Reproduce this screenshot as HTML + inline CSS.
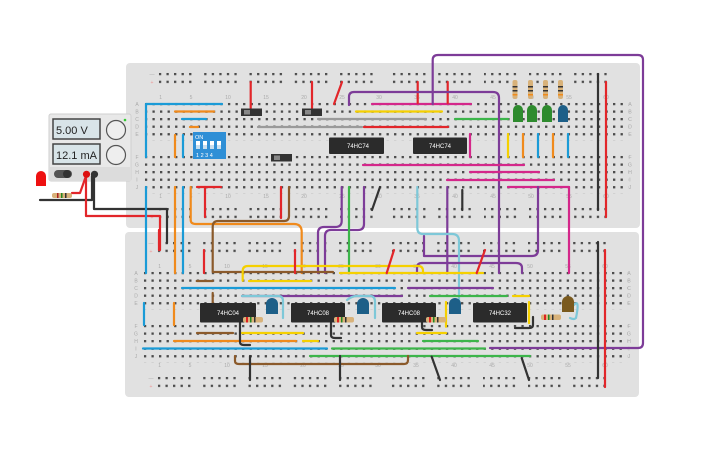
<!DOCTYPE html>
<html><head><meta charset="utf-8"><style>
html,body{margin:0;padding:0;background:#fff;width:725px;height:453px;overflow:hidden}
svg{display:block}
text{font-family:"Liberation Sans",sans-serif}
</style></head><body>
<svg width="725" height="453" viewBox="0 0 725 453" xmlns="http://www.w3.org/2000/svg">
<defs>
<pattern id="h" patternUnits="userSpaceOnUse" x="144.9" y="102.9" width="7.55" height="7.55"><rect width="2.3" height="2.3" fill="#4a4a4a"/></pattern>
<pattern id="h2" patternUnits="userSpaceOnUse" x="144.9" y="155.9" width="7.55" height="7.55"><rect width="2.3" height="2.3" fill="#4a4a4a"/></pattern>
<pattern id="r" patternUnits="userSpaceOnUse" x="158.9" y="72.9" width="7.55" height="7.8"><rect width="2.3" height="2.3" fill="#4a4a4a"/></pattern>
<pattern id="rb" patternUnits="userSpaceOnUse" x="158.9" y="207.9" width="7.55" height="7.8"><rect width="2.3" height="2.3" fill="#4a4a4a"/></pattern>
<g id="board">
<rect x="126" y="63" width="514" height="165" rx="4" fill="#e1e1e1"/>
<rect x="144.9" y="102.9" width="483.2" height="37.75" fill="url(#h)"/>
<rect x="144.9" y="155.9" width="483.2" height="37.75" fill="url(#h2)"/>
<g fill="url(#r)">
<rect x="158.9" y="72.9" width="37" height="11"/><rect x="204" y="72.9" width="37" height="11"/><rect x="249" y="72.9" width="37" height="11"/><rect x="294" y="72.9" width="37" height="11"/><rect x="340" y="72.9" width="37" height="11"/><rect x="392" y="72.9" width="37" height="11"/><rect x="438" y="72.9" width="37" height="11"/><rect x="484" y="72.9" width="37" height="11"/><rect x="529" y="72.9" width="37" height="11"/><rect x="574" y="72.9" width="37" height="11"/>
</g>
<g fill="url(#rb)">
<rect x="158.9" y="207.9" width="37" height="11"/><rect x="204" y="207.9" width="37" height="11"/><rect x="249" y="207.9" width="37" height="11"/><rect x="294" y="207.9" width="37" height="11"/><rect x="340" y="207.9" width="37" height="11"/><rect x="392" y="207.9" width="37" height="11"/><rect x="438" y="207.9" width="37" height="11"/><rect x="484" y="207.9" width="37" height="11"/><rect x="529" y="207.9" width="37" height="11"/><rect x="574" y="207.9" width="37" height="11"/>
</g>
<g font-size="5" fill="#aaa" text-anchor="middle">
<text x="152" y="76">—</text><text x="152" y="84" fill="#e99">+</text>
<text x="152" y="211">—</text><text x="152" y="219" fill="#e99">+</text>
<text x="160.7" y="99">1</text><text x="191" y="99">5</text><text x="228" y="99">10</text><text x="266" y="99">15</text><text x="304" y="99">20</text><text x="342" y="99">25</text><text x="379" y="99">30</text><text x="417" y="99">35</text><text x="455" y="99">40</text><text x="493" y="99">45</text><text x="531" y="99">50</text><text x="569" y="99">55</text><text x="606" y="99">60</text>
<text x="160.7" y="198">1</text><text x="191" y="198">5</text><text x="228" y="198">10</text><text x="266" y="198">15</text><text x="304" y="198">20</text><text x="342" y="198">25</text><text x="379" y="198">30</text><text x="417" y="198">35</text><text x="455" y="198">40</text><text x="493" y="198">45</text><text x="531" y="198">50</text><text x="569" y="198">55</text><text x="606" y="198">60</text>
<text x="137" y="106">A</text><text x="137" y="113.5">B</text><text x="137" y="121">C</text><text x="137" y="128.6">D</text><text x="137" y="136">E</text><text x="137" y="159">F</text><text x="137" y="166.6">G</text><text x="137" y="174">H</text><text x="137" y="181.7">I</text><text x="137" y="189.2">J</text>
<text x="630" y="106">A</text><text x="630" y="113.5">B</text><text x="630" y="121">C</text><text x="630" y="128.6">D</text><text x="630" y="136">E</text><text x="630" y="159">F</text><text x="630" y="166.6">G</text><text x="630" y="174">H</text><text x="630" y="181.7">I</text><text x="630" y="189.2">J</text>
</g>
</g>
</defs>
<use href="#board"/>
<use href="#board" transform="translate(-1,169)"/>

<!-- power supply -->
<rect x="49" y="114" width="82" height="67" rx="2" fill="#e8e8e8" stroke="#cfcfcf"/>
<rect x="49" y="167" width="82" height="14" fill="#dcdcdc"/>
<rect x="53" y="119" width="47" height="20" fill="#d8e4e8" stroke="#444" stroke-width="1.5"/>
<rect x="53" y="144" width="47" height="20" fill="#d8e4e8" stroke="#444" stroke-width="1.5"/>
<text x="56" y="134" font-size="11" fill="#222">5.00 V</text>
<text x="56" y="159" font-size="11" fill="#222">12.1 mA</text>
<circle cx="116" cy="130" r="9.5" fill="#eee" stroke="#555" stroke-width="1.2"/>
<circle cx="116" cy="155" r="9.5" fill="#eee" stroke="#555" stroke-width="1.2"/>
<circle cx="125" cy="120" r="1.3" fill="#3c3"/>
<rect x="54" y="170" width="18" height="8" rx="4" fill="#555"/><circle cx="67" cy="174" r="4" fill="#333"/>
<!-- power wires -->
<g fill="none" stroke-width="2.2" stroke-linecap="round" stroke-linejoin="round">
<path d="M92 176 V200 H40" stroke="#333"/>
<path d="M86 176 L80 193 H72" stroke="#e2262a"/>
<path d="M86 176 V216 H160 V250" stroke="#e2262a"/>
<path d="M94 176 V209 H167 V243" stroke="#333"/>
</g>
<circle cx="86.5" cy="174.3" r="3.6" fill="#d11"/>
<circle cx="94.5" cy="174.3" r="3.6" fill="#333"/>
<!-- red LED left -->
<path d="M36 176 a5 5 0 0 1 10 0 v10 h-10z" fill="#e11"/>
<rect x="52" y="193" width="20" height="5" rx="2" fill="#d8b27a"/>
<rect x="57" y="193" width="1.5" height="5" fill="#a22"/><rect x="61" y="193" width="1.5" height="5" fill="#282"/><rect x="65" y="193" width="1.5" height="5" fill="#333"/>

<!-- wires -->
<g fill="none" stroke-width="2.2" stroke-linecap="round" stroke-linejoin="round">
<!-- top board -->
<path d="M222 104 H146 V157" stroke="#1a9bd7"/>
<path d="M146 187 V273" stroke="#1a9bd7"/>
<path d="M175 111.5 H214" stroke="#f08a1c"/>
<path d="M182 119 H206" stroke="#1a9bd7"/>
<path d="M190 127 H198" stroke="#f08a1c"/>
<path d="M175 135 V157" stroke="#f08a1c"/>
<path d="M183 135 V157" stroke="#1a9bd7"/>
<path d="M250.7 82 V108" stroke="#e2262a"/>
<path d="M312 82 V108" stroke="#e2262a"/>
<path d="M342 82 L334 104" stroke="#e2262a"/>
<path d="M318 119 H426" stroke="#9a9a9a"/>
<path d="M258 127 H362" stroke="#9a9a9a"/>
<path d="M364 127 H448" stroke="#e2262a"/>
<path d="M356 111.5 H442" stroke="#f5d000"/>
<path d="M372 104 H471" stroke="#d4278a"/>
<path d="M417.7 82 V103" stroke="#e2262a"/>
<path d="M447.7 82 V103" stroke="#e2262a"/>
<path d="M455 119 H508" stroke="#3cb54a"/>
<path d="M432.7 104 V60 Q432.7 55 438 55 H638 Q643 55 643 60 V343 Q643 348 638 348 H490" stroke="#7d3c98"/>
<path d="M349 105 V97 Q349 92 354 92 H493 Q499 92 499 98 V273" stroke="#7d3c98"/>
<path d="M508 134 V157" stroke="#f5d000"/>
<path d="M523 134 V157" stroke="#f08a1c"/>
<path d="M538 134 V157" stroke="#1a9bd7"/>
<path d="M553 134 V157" stroke="#f08a1c"/>
<path d="M568 134 V157" stroke="#1a9bd7"/>
<path d="M470 134 V157" stroke="#d4278a"/>
<path d="M363 165 H524" stroke="#d4278a"/>
<path d="M470 172 H539" stroke="#d4278a"/>
<path d="M447 180 H554" stroke="#d4278a"/>
<path d="M508 187 H569 V273" stroke="#d4278a"/>
<path d="M538 187 V250 Q538 256 532 256 H424 V236" stroke="#7d3c98"/>
<path d="M598 74 V210" stroke="#333"/>
<path d="M606 82 V217" stroke="#e2262a"/>
<path d="M380 187 L372 210" stroke="#333"/>
<path d="M462.3 190 V210" stroke="#333"/>
<path d="M341.7 187 V221 Q341.7 227 335 227 H324 Q318 227 318 233 V273" stroke="#7d3c98"/>
<path d="M364 187 V224 Q364 230 358 230 H331 Q325 230 325 236 V273" stroke="#7d3c98"/>
<path d="M349 187 V273" stroke="#3cb54a"/>
<path d="M447.3 187 V273" stroke="#7d3c98"/>
<path d="M417.3 187 V228 Q417.3 234 423 234 H452 Q459 234 459 241 V300" stroke="#7ec8d8"/>
<path d="M417 273 V268 Q417 263 422 263 H516 Q522 263 522 268 V273" stroke="#7d3c98"/>
<path d="M197 187 H221" stroke="#e2262a"/>
<path d="M205 187 V217" stroke="#e2262a"/>
<path d="M175 187 V273" stroke="#f08a1c"/>
<path d="M183 187 V273" stroke="#1a9bd7"/>
<path d="M281 187 V218" stroke="#e2262a"/>
<path d="M190.7 187 V220 Q190.7 224 196 224 H294 Q301.7 224 301.7 232 V273" stroke="#f08a1c"/>
<path d="M289 187 V216 Q289 221 284 221 H218 Q212.7 221 212.7 227 V272 H333" stroke="#8b5a2b"/>
<!-- bottom board -->
<path d="M159 230 V250" stroke="#e2262a"/>
<path d="M204 250 V273" stroke="#e2262a"/>
<path d="M196.7 281 H212.7" stroke="#8b5a2b"/>
<path d="M242.7 280.7 V271 Q242.7 266 248 266 H418 Q423 266 423 271 V273" stroke="#f5d000"/>
<path d="M249 281 H311" stroke="#f5d000"/>
<path d="M295 250 V273" stroke="#e2262a"/>
<path d="M340 273 H483" stroke="#f5d000"/>
<path d="M386.7 273 L394 250" stroke="#e2262a"/>
<path d="M476.7 273 L485 250" stroke="#e2262a"/>
<path d="M182 288 H395" stroke="#1a9bd7"/>
<path d="M408 288 H493" stroke="#7d3c98"/>
<path d="M242 296 H402" stroke="#7d3c98"/>
<path d="M430 296 H507" stroke="#3cb54a"/>
<path d="M513 296 H529" stroke="#f5d000"/>
<path d="M242 296 H278 Q283 296 283 301 V318" stroke="#7ec8d8"/>
<path d="M347 300 Q352 296 357 296 H370 Q375 296 375 302 V318" stroke="#7ec8d8"/>
<path d="M446 302 V326.7" stroke="#f5d000"/>
<path d="M529 302 V323" stroke="#f5d000"/>
<path d="M574 305 Q580 298 576 318 Q574 320 570 318" stroke="#7ec8d8"/>
<path d="M197 333 H233" stroke="#8b5a2b"/>
<path d="M212.7 293 V318" stroke="#8b5a2b"/>
<path d="M242 333 H303" stroke="#f5d000"/>
<path d="M174 341 H296" stroke="#f08a1c"/>
<path d="M303 341 H318" stroke="#f5d000"/>
<path d="M423 341 H478" stroke="#3cb54a"/>
<path d="M417 333 H446" stroke="#f5d000"/>
<path d="M143 348.5 H327" stroke="#1a9bd7"/>
<path d="M332 348.5 H485" stroke="#3cb54a"/>
<path d="M310 356 H530" stroke="#3cb54a"/>
<path d="M144 303 V325" stroke="#1a9bd7"/>
<path d="M174 303 V325" stroke="#f08a1c"/>
<path d="M235 356 V361 Q235 364 239 364 H404 Q408 364 408 360 V356" stroke="#8b5a2b"/>
<path d="M250 356 V380" stroke="#333"/>
<path d="M340 356 V380" stroke="#333"/>
<path d="M431.7 356.7 L440 380" stroke="#333"/>
<path d="M521.7 358 L529 380" stroke="#333"/>
<path d="M598 242 V378" stroke="#333"/>
<path d="M605 250 V387" stroke="#e2262a"/>
<path d="M240 320 V342 Q240 345 244 345 H250" stroke="#333"/>
<path d="M331 320 V335 Q331 338 335 338 H341" stroke="#333"/>
<path d="M422 320 V327 Q422 330 426 330 H432" stroke="#333"/>
<path d="M533 317 V325 Q533 328 529 328 H515" stroke="#333"/>
</g>

<!-- switches top -->
<rect x="193" y="132" width="33" height="27" fill="#2f8fd6"/>
<text x="195" y="139" font-size="5.5" fill="#fff">ON</text>
<g fill="#fff"><rect x="196" y="141" width="4" height="8"/><rect x="203" y="141" width="4" height="8"/><rect x="210" y="141" width="4" height="8"/><rect x="217" y="141" width="4" height="8"/></g>
<g fill="#2f8fd6"><rect x="196" y="145" width="4" height="4" fill="#c8dff0"/><rect x="203" y="145" width="4" height="4" fill="#c8dff0"/><rect x="210" y="145" width="4" height="4" fill="#c8dff0"/><rect x="217" y="145" width="4" height="4" fill="#c8dff0"/></g>
<text x="196" y="157" font-size="5.5" fill="#fff">1 2 3 4</text>
<g>
<rect x="241" y="108.5" width="21" height="7.5" fill="#333"/><rect x="244" y="110" width="6" height="4.5" fill="#888"/>
<rect x="302" y="108.5" width="20" height="7.5" fill="#333"/><rect x="305" y="110" width="6" height="4.5" fill="#888"/>
<rect x="271" y="154" width="21" height="7.5" fill="#333"/><rect x="274" y="155.5" width="6" height="4.5" fill="#888"/>
</g>
<!-- chips -->
<g font-size="6" fill="#fff" text-anchor="middle">
<rect x="329" y="137.5" width="55" height="16.5" rx="1" fill="#2b2b2b"/><text x="358" y="148">74HC74</text>
<rect x="413" y="137.5" width="54" height="16.5" rx="1" fill="#2b2b2b"/><text x="440" y="148">74HC74</text>
<rect x="200" y="303" width="56" height="19.5" rx="1" fill="#2b2b2b"/><text x="228" y="315">74HC04</text>
<rect x="291" y="303" width="54" height="19.5" rx="1" fill="#2b2b2b"/><text x="318" y="315">74HC08</text>
<rect x="382" y="303" width="54" height="19.5" rx="1" fill="#2b2b2b"/><text x="409" y="315">74HC08</text>
<rect x="473" y="303" width="54" height="19.5" rx="1" fill="#2b2b2b"/><text x="500" y="315">74HC32</text>
</g>
<!-- top LEDs + resistors -->
<g>
<g fill="#d8b27a"><rect x="512.5" y="80" width="5" height="19" rx="2"/><rect x="528" y="80" width="5" height="19" rx="2"/><rect x="543" y="80" width="5" height="19" rx="2"/><rect x="558" y="80" width="5" height="19" rx="2"/></g>
<g fill="#333"><rect x="512.5" y="86" width="5" height="1.5"/><rect x="528" y="86" width="5" height="1.5"/><rect x="543" y="86" width="5" height="1.5"/><rect x="558" y="86" width="5" height="1.5"/>
<rect x="512.5" y="90" width="5" height="1.5"/><rect x="528" y="90" width="5" height="1.5"/><rect x="543" y="90" width="5" height="1.5"/><rect x="558" y="90" width="5" height="1.5"/></g>
<g fill="#f08a1c"><rect x="512.5" y="94" width="5" height="1.5"/><rect x="528" y="94" width="5" height="1.5"/><rect x="543" y="94" width="5" height="1.5"/><rect x="558" y="94" width="5" height="1.5"/></g>
<path d="M513 122 v-12 a5 5 0 0 1 10 0 v12z" fill="#2e8b2e"/>
<path d="M527 122 v-12 a5 5 0 0 1 10 0 v12z" fill="#2e8b2e"/>
<path d="M542 122 v-12 a5 5 0 0 1 10 0 v12z" fill="#2e8b2e"/>
<path d="M558 122 v-12 a5 5 0 0 1 10 0 v12z" fill="#1d5f88"/>
</g>
<!-- bottom LEDs -->
<path d="M266 314 v-10 a6 6 0 0 1 12 0 v10z" fill="#1d5f88"/>
<path d="M357 314 v-10 a6 6 0 0 1 12 0 v10z" fill="#1d5f88"/>
<path d="M449 314 v-10 a6 6 0 0 1 12 0 v10z" fill="#1d5f88"/>
<path d="M562 312 v-10 a6 6 0 0 1 12 0 v10z" fill="#7a5a1e"/>
<!-- bottom resistors -->
<g>
<rect x="243" y="317" width="20" height="5.5" rx="2" fill="#d8b27a"/><rect x="246" y="317" width="2" height="5.5" fill="#d22"/><rect x="250" y="317" width="1.5" height="5.5" fill="#282"/><rect x="254" y="317" width="1.5" height="5.5" fill="#333"/>
<rect x="334" y="317" width="20" height="5.5" rx="2" fill="#d8b27a"/><rect x="337" y="317" width="2" height="5.5" fill="#d22"/><rect x="341" y="317" width="1.5" height="5.5" fill="#282"/><rect x="345" y="317" width="1.5" height="5.5" fill="#333"/>
<rect x="426" y="317" width="20" height="5.5" rx="2" fill="#d8b27a"/><rect x="429" y="317" width="2" height="5.5" fill="#d22"/><rect x="433" y="317" width="1.5" height="5.5" fill="#282"/><rect x="437" y="317" width="1.5" height="5.5" fill="#333"/>
<rect x="541" y="314.5" width="20" height="5.5" rx="2" fill="#d8b27a"/><rect x="544" y="314.5" width="2" height="5.5" fill="#d22"/><rect x="548" y="314.5" width="1.5" height="5.5" fill="#282"/><rect x="552" y="314.5" width="1.5" height="5.5" fill="#333"/>
</g>
</svg>
</body></html>
